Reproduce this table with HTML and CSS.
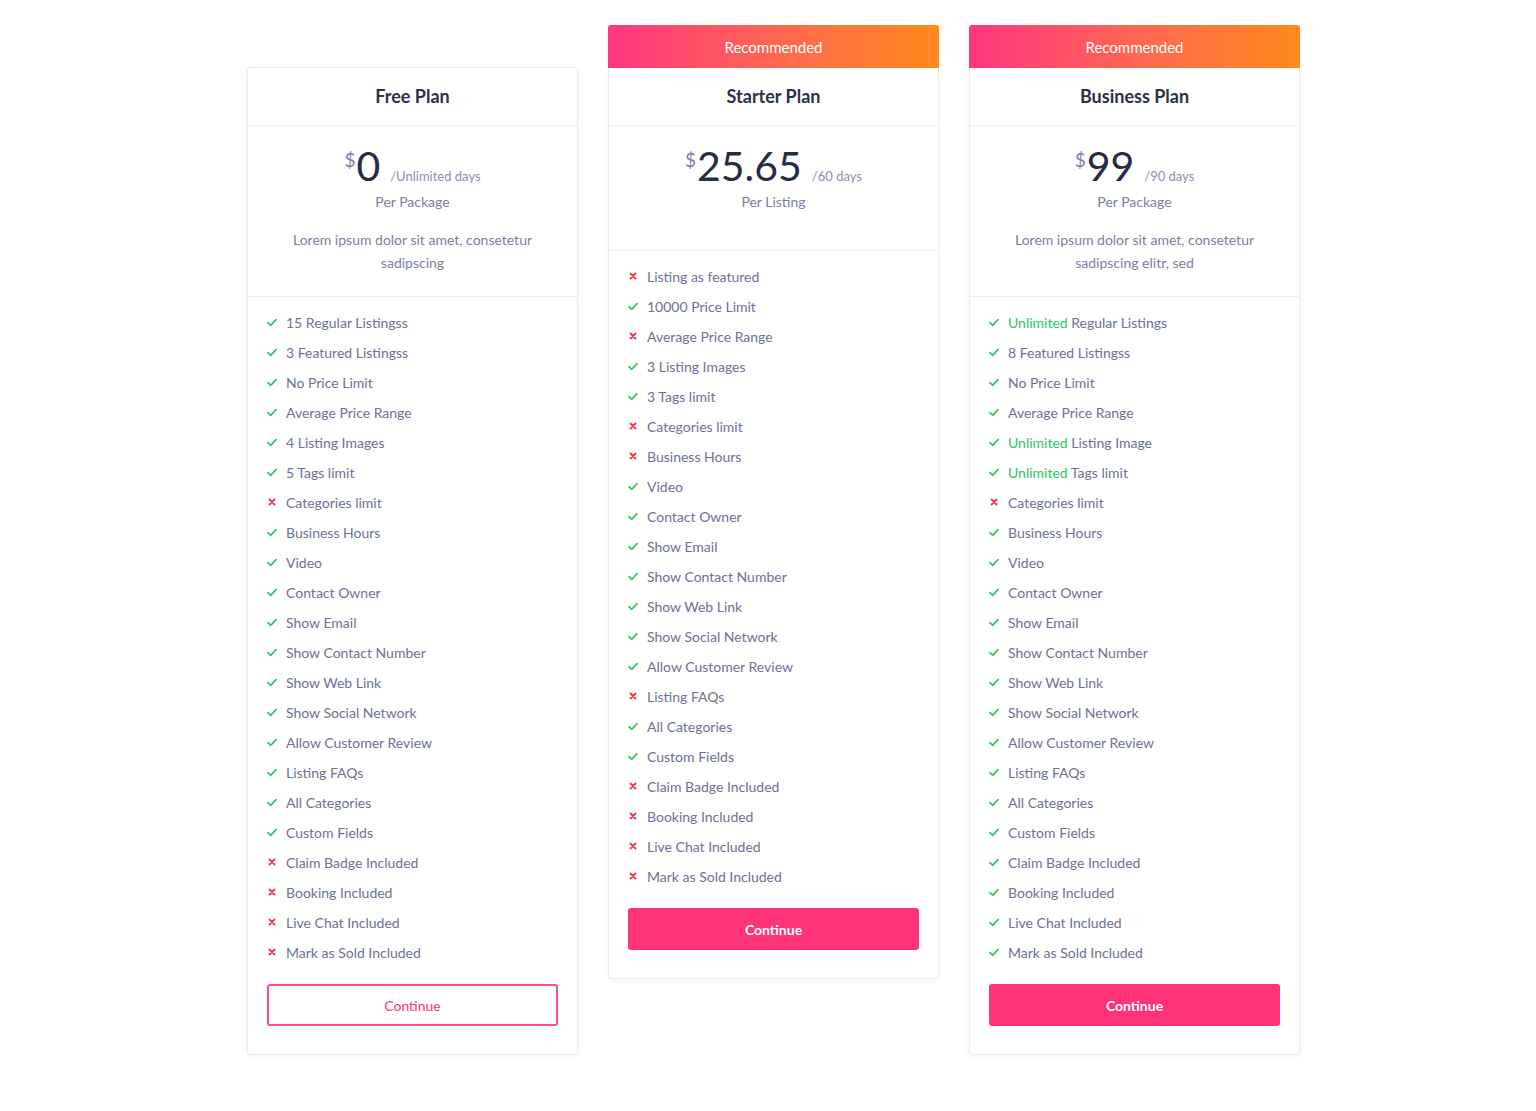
FILE: index.html
```html
<!DOCTYPE html>
<html>
<head>
<meta charset="utf-8">
<link rel="stylesheet" href="styles.css">
</head>
<body>
<svg width="0" height="0" style="position:absolute">
  <defs>
    <symbol id="ok" viewBox="0 0 10 8"><path d="M1 4.2 L3.7 6.8 L9 1.2" fill="none" stroke="currentColor" stroke-width="1.8" stroke-linecap="round" stroke-linejoin="round"/></symbol>
    <symbol id="no" viewBox="0 0 8 8"><path d="M1.5 1.5 L6.5 6.5 M6.5 1.5 L1.5 6.5" fill="none" stroke="currentColor" stroke-width="1.8" stroke-linecap="round"/></symbol>
  </defs>
</svg>
<div class="pricing">
  <div class="plan">
    <div class="ribbon ribbon-empty"></div>
    <div class="card card-plain">
      <div class="card-title">Free Plan</div>
      <div class="price-box">
        <div class="price"><span class="cur">$</span><span class="amount">0</span><span class="period">/Unlimited days</span></div>
        <div class="per">Per Package</div>
        <div class="desc">Lorem ipsum dolor sit amet, consetetur<br>sadipscing</div>
      </div>
      <ul class="features">
        <li><svg class="ic ok"><use href="#ok"/></svg><span>15 Regular Listingss</span></li>
        <li><svg class="ic ok"><use href="#ok"/></svg><span>3 Featured Listingss</span></li>
        <li><svg class="ic ok"><use href="#ok"/></svg><span>No Price Limit</span></li>
        <li><svg class="ic ok"><use href="#ok"/></svg><span>Average Price Range</span></li>
        <li><svg class="ic ok"><use href="#ok"/></svg><span>4 Listing Images</span></li>
        <li><svg class="ic ok"><use href="#ok"/></svg><span>5 Tags limit</span></li>
        <li><svg class="ic no"><use href="#no"/></svg><span>Categories limit</span></li>
        <li><svg class="ic ok"><use href="#ok"/></svg><span>Business Hours</span></li>
        <li><svg class="ic ok"><use href="#ok"/></svg><span>Video</span></li>
        <li><svg class="ic ok"><use href="#ok"/></svg><span>Contact Owner</span></li>
        <li><svg class="ic ok"><use href="#ok"/></svg><span>Show Email</span></li>
        <li><svg class="ic ok"><use href="#ok"/></svg><span>Show Contact Number</span></li>
        <li><svg class="ic ok"><use href="#ok"/></svg><span>Show Web Link</span></li>
        <li><svg class="ic ok"><use href="#ok"/></svg><span>Show Social Network</span></li>
        <li><svg class="ic ok"><use href="#ok"/></svg><span>Allow Customer Review</span></li>
        <li><svg class="ic ok"><use href="#ok"/></svg><span>Listing FAQs</span></li>
        <li><svg class="ic ok"><use href="#ok"/></svg><span>All Categories</span></li>
        <li><svg class="ic ok"><use href="#ok"/></svg><span>Custom Fields</span></li>
        <li><svg class="ic no"><use href="#no"/></svg><span>Claim Badge Included</span></li>
        <li><svg class="ic no"><use href="#no"/></svg><span>Booking Included</span></li>
        <li><svg class="ic no"><use href="#no"/></svg><span>Live Chat Included</span></li>
        <li><svg class="ic no"><use href="#no"/></svg><span>Mark as Sold Included</span></li>
      </ul>
      <div class="btn-wrap"><a class="btn btn-outline">Continue</a></div>
    </div>
  </div>

  <div class="plan">
    <div class="ribbon">Recommended</div>
    <div class="card">
      <div class="card-title">Starter Plan</div>
      <div class="price-box">
        <div class="price"><span class="cur">$</span><span class="amount">25.65</span><span class="period">/60 days</span></div>
        <div class="per">Per Listing</div>
        <div class="desc"></div>
      </div>
      <ul class="features">
        <li><svg class="ic no"><use href="#no"/></svg><span>Listing as featured</span></li>
        <li><svg class="ic ok"><use href="#ok"/></svg><span>10000 Price Limit</span></li>
        <li><svg class="ic no"><use href="#no"/></svg><span>Average Price Range</span></li>
        <li><svg class="ic ok"><use href="#ok"/></svg><span>3 Listing Images</span></li>
        <li><svg class="ic ok"><use href="#ok"/></svg><span>3 Tags limit</span></li>
        <li><svg class="ic no"><use href="#no"/></svg><span>Categories limit</span></li>
        <li><svg class="ic no"><use href="#no"/></svg><span>Business Hours</span></li>
        <li><svg class="ic ok"><use href="#ok"/></svg><span>Video</span></li>
        <li><svg class="ic ok"><use href="#ok"/></svg><span>Contact Owner</span></li>
        <li><svg class="ic ok"><use href="#ok"/></svg><span>Show Email</span></li>
        <li><svg class="ic ok"><use href="#ok"/></svg><span>Show Contact Number</span></li>
        <li><svg class="ic ok"><use href="#ok"/></svg><span>Show Web Link</span></li>
        <li><svg class="ic ok"><use href="#ok"/></svg><span>Show Social Network</span></li>
        <li><svg class="ic ok"><use href="#ok"/></svg><span>Allow Customer Review</span></li>
        <li><svg class="ic no"><use href="#no"/></svg><span>Listing FAQs</span></li>
        <li><svg class="ic ok"><use href="#ok"/></svg><span>All Categories</span></li>
        <li><svg class="ic ok"><use href="#ok"/></svg><span>Custom Fields</span></li>
        <li><svg class="ic no"><use href="#no"/></svg><span>Claim Badge Included</span></li>
        <li><svg class="ic no"><use href="#no"/></svg><span>Booking Included</span></li>
        <li><svg class="ic no"><use href="#no"/></svg><span>Live Chat Included</span></li>
        <li><svg class="ic no"><use href="#no"/></svg><span>Mark as Sold Included</span></li>
      </ul>
      <div class="btn-wrap"><a class="btn btn-solid">Continue</a></div>
    </div>
  </div>

  <div class="plan">
    <div class="ribbon">Recommended</div>
    <div class="card">
      <div class="card-title">Business Plan</div>
      <div class="price-box">
        <div class="price"><span class="cur">$</span><span class="amount">99</span><span class="period">/90 days</span></div>
        <div class="per">Per Package</div>
        <div class="desc">Lorem ipsum dolor sit amet, consetetur<br>sadipscing elitr, sed</div>
      </div>
      <ul class="features">
        <li><svg class="ic ok"><use href="#ok"/></svg><span><em class="hl">Unlimited</em> Regular Listings</span></li>
        <li><svg class="ic ok"><use href="#ok"/></svg><span>8 Featured Listingss</span></li>
        <li><svg class="ic ok"><use href="#ok"/></svg><span>No Price Limit</span></li>
        <li><svg class="ic ok"><use href="#ok"/></svg><span>Average Price Range</span></li>
        <li><svg class="ic ok"><use href="#ok"/></svg><span><em class="hl">Unlimited</em> Listing Image</span></li>
        <li><svg class="ic ok"><use href="#ok"/></svg><span><em class="hl">Unlimited</em> Tags limit</span></li>
        <li><svg class="ic no"><use href="#no"/></svg><span>Categories limit</span></li>
        <li><svg class="ic ok"><use href="#ok"/></svg><span>Business Hours</span></li>
        <li><svg class="ic ok"><use href="#ok"/></svg><span>Video</span></li>
        <li><svg class="ic ok"><use href="#ok"/></svg><span>Contact Owner</span></li>
        <li><svg class="ic ok"><use href="#ok"/></svg><span>Show Email</span></li>
        <li><svg class="ic ok"><use href="#ok"/></svg><span>Show Contact Number</span></li>
        <li><svg class="ic ok"><use href="#ok"/></svg><span>Show Web Link</span></li>
        <li><svg class="ic ok"><use href="#ok"/></svg><span>Show Social Network</span></li>
        <li><svg class="ic ok"><use href="#ok"/></svg><span>Allow Customer Review</span></li>
        <li><svg class="ic ok"><use href="#ok"/></svg><span>Listing FAQs</span></li>
        <li><svg class="ic ok"><use href="#ok"/></svg><span>All Categories</span></li>
        <li><svg class="ic ok"><use href="#ok"/></svg><span>Custom Fields</span></li>
        <li><svg class="ic ok"><use href="#ok"/></svg><span>Claim Badge Included</span></li>
        <li><svg class="ic ok"><use href="#ok"/></svg><span>Booking Included</span></li>
        <li><svg class="ic ok"><use href="#ok"/></svg><span>Live Chat Included</span></li>
        <li><svg class="ic ok"><use href="#ok"/></svg><span>Mark as Sold Included</span></li>
      </ul>
      <div class="btn-wrap"><a class="btn btn-solid">Continue</a></div>
    </div>
  </div>
</div>
</body>
</html>
```

FILE: styles.css
```css
* { box-sizing: border-box; }
html, body { margin: 0; padding: 0; background: #ffffff; }
body {
  font-family: "Lato", "Noto Sans", sans-serif;
  color: #6c7293;
  -webkit-font-smoothing: antialiased;
}
.pricing {
  display: flex;
  align-items: flex-start;
  gap: 30px;
  padding: 25px 0 40px 247px;
}
.plan {
  width: 331px;
  display: flex;
  flex-direction: column;
}
.ribbon {
  height: 43px;
  display: flex;
  align-items: center;
  justify-content: center;
  color: #ffffff;
  font-size: 15px;
  background: linear-gradient(90deg, #ff3580 0%, #ff6b4e 55%, #ff8a1c 100%);
  border-radius: 3px 3px 0 0;
}
.ribbon-empty { background: none; height: 42px; }
.card {
  background: #fff;
  border: 1px solid #e9ebf3;
  border-top: none;
  box-shadow: 0 2px 6px rgba(40, 50, 90, 0.05);
  border-radius: 0 0 3px 3px;
}
.card-plain { border-top: 1px solid #e9ebf3; border-radius: 3px; }
.card-title {
  height: 58px;
  padding-bottom: 2px;
  display: flex;
  align-items: center;
  justify-content: center;
  font-size: 18px;
  font-weight: 700;
  color: #2c3047;
  border-bottom: 1px solid #eceef5;
}
.price-box {
  text-align: center;
  padding: 16px 20px 22px;
  border-bottom: 1px solid #eceef5;
}
.price {
  height: 48px;
  display: flex;
  justify-content: center;
  align-items: baseline;
  line-height: 48px;
}
.cur {
  font-size: 19px;
  color: #7d82a3;
  align-self: flex-start;
  line-height: 36px;
  margin-right: 1px;
}
.amount {
  font-size: 41px;
  color: #272c42;
  font-weight: 400;
}
.period {
  font-size: 13px;
  color: #8c90ad;
  margin-left: 10px;
}
.per {
  font-size: 14px;
  line-height: 23px;
  color: #7a7fa0;
}
.desc {
  margin-top: 15px;
  font-size: 14px;
  line-height: 23px;
  color: #7a7fa0;
}
.features {
  list-style: none;
  margin: 0;
  padding: 10px 19px 0;
}
.features li {
  height: 30px;
  display: flex;
  align-items: center;
  gap: 9px;
  font-size: 14px;
  color: #6c7293;
}
.ic { width: 10px; height: 9px; flex: none; }
.ic.ok { color: #3cc36a; }
.ic.no { color: #f2334d; width: 10px; height: 8px; }
.hl { font-style: normal; color: #2ec866; }
.btn-wrap { padding: 17px 19px 28px; }
.btn {
  display: flex;
  align-items: center;
  justify-content: center;
  height: 42px;
  border-radius: 3px;
  font-size: 14px;
  cursor: pointer;
}
.btn-outline { border: 2px solid #ff4d85; color: #ff3377; }
.btn-solid { background: #ff3377; color: #fff; font-weight: 700; }
```
